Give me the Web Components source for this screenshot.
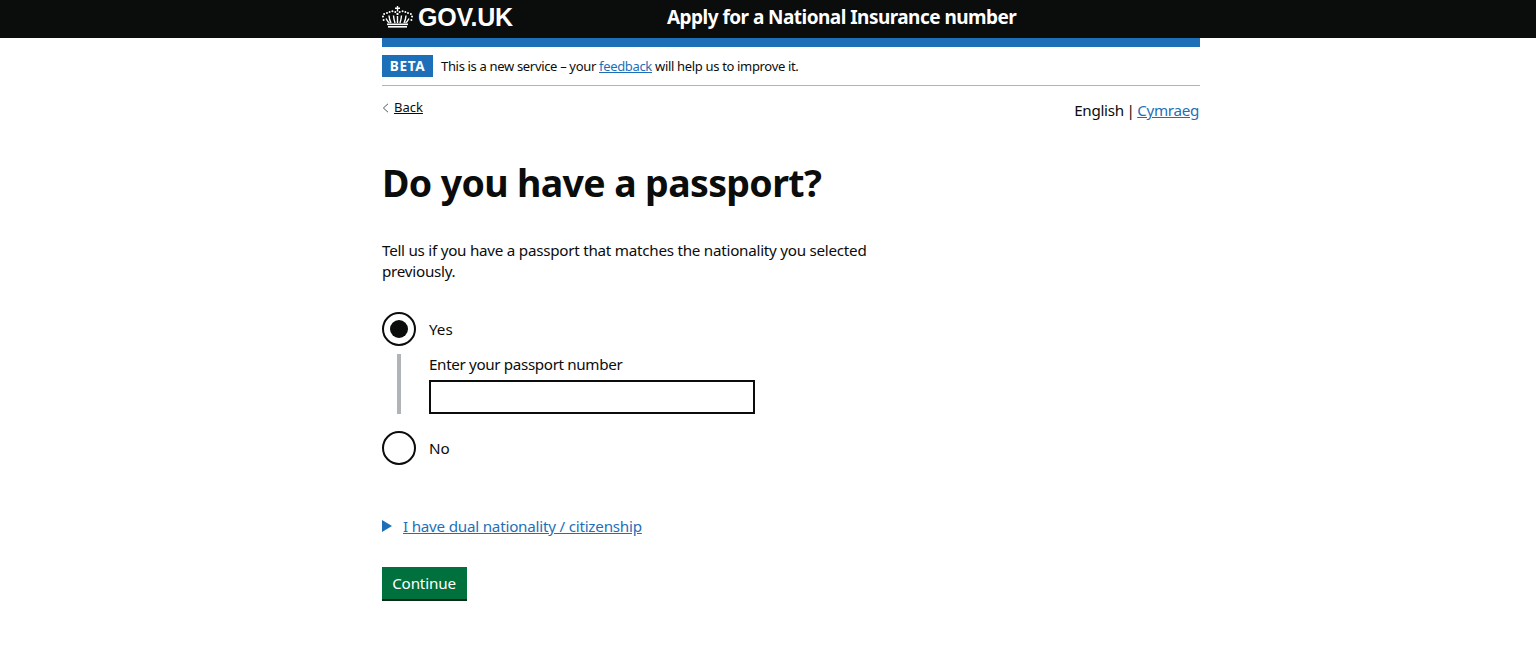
<!DOCTYPE html>
<html lang="en"><head><meta charset="utf-8"><title>Apply for a National Insurance number</title>
<style>
html,body{margin:0;padding:0;background:#fff;height:655px;overflow:hidden;font-family:"Noto Sans","Liberation Sans",sans-serif;color:#0b0c0c}
</style></head><body>
<gov-header></gov-header>
<gov-page>
  <gov-phase></gov-phase>
  <gov-nav></gov-nav>
  <gov-question></gov-question>
</gov-page>
<script>
function def(name, html){
  customElements.define(name, class extends HTMLElement{
    constructor(){super();this.attachShadow({mode:'open'}).innerHTML=html;}
  });
}
const crown=`<svg width="31" height="22" viewBox="0 0 31 22" fill="#fff" aria-hidden="true">
<path d="M14.8 0h1.4v1.6h1.8V3h-1.8v2.4h-1.4V3H13V1.600h1.800z"/>
<g fill="none" stroke="#fff" stroke-width="2" stroke-linecap="round" stroke-dasharray="0 3">
<path d="M15.500 8C13 4.600 9.500 4.600 7.500 6.200"/><path d="M15.500 8C18 4.600 21.500 4.600 23.500 6.200"/>
<path d="M5 7C2.500 6.800.8 8.600 1 11.500 1.200 13.500 2 15 3 16"/><path d="M26 7c2.500-.2 4.200 1.600 4 4.500-.2 2-1 3.500-2 4.500"/>
</g>
<g fill="none" stroke="#fff" stroke-width="1.400">
<path d="M7 9.500c.2 3 1 5.500 2 7.500M24 9.500c-.2 3-1 5.500-2 7.500M15.500 10v7M11.500 9.500c.2 3 .8 5.500 1.500 7.500M19.500 9.500c-.2 3-.8 5.500-1.500 7.500"/>
<path d="M4 12.500c1 2 2 3.500 3.500 4.500M27 12.500c-1 2-2 3.500-3.500 4.500"/>
</g>
<rect x="5" y="17.500" width="21" height="1.600"/>
<rect x="6" y="20" width="19" height="1.600"/>
</svg>`;
def('gov-header',`<style>
:host{display:block;background:#0b0c0c;height:38px;color:#fff}
.in{display:flex;align-items:center;height:38px;margin-left:382px;width:818px}
.logo{display:flex;align-items:center;gap:5px;width:285px;font:700 25px/38px "Liberation Sans",Arial,sans-serif;letter-spacing:-.25px}
.logo span{margin-top:-4px}
svg{display:block;margin-top:-4px}
.name{font:700 19px/38px "Noto Sans",sans-serif;letter-spacing:-.54px;margin-top:-5px}
</style><div class="in"><div class="logo">${crown}<span>GOV.UK</span></div><div class="name">Apply for a National Insurance number</div></div>`);

def('gov-page',`<style>
:host{display:block;width:818px;margin-left:382px}
.bar{height:9px;background:#1d70b8}
</style><div class="bar"></div><slot></slot>`);

def('gov-phase',`<style>
:host{display:flex;align-items:center;height:38px;border-bottom:1px solid #b1b4b6;font-size:13px;line-height:20px;gap:8px;letter-spacing:-.33px}
.tag{background:#1d70b8;color:#fff;font-weight:700;font-size:13.5px;letter-spacing:.7px;width:51px;height:22px;line-height:22px;text-align:center;margin-top:-1px}
a{color:#1d70b8}
</style><span class="tag">BETA</span><span>This is a new service – your <a href="#">feedback</a> will help us to improve it.</span>`);

def('gov-nav',`<style>
:host{display:flex;justify-content:space-between;align-items:flex-start;height:61px}
.back{display:flex;align-items:center;gap:5px;margin-top:12px;font-size:13px;line-height:19px;color:#0b0c0c}
a{color:inherit}
.lang{margin:13px 1px 0 0;font-size:15.2px;line-height:22px;letter-spacing:-.3px;word-spacing:-1px}
.lang a{color:#1d70b8}
svg{display:block}
</style>
<div class="back"><svg width="7" height="10" viewBox="0 0 7 10" fill="none" stroke="#505a5f" stroke-width="1"><path d="M6 .8L1.400 5 6 9.200"/></svg><a href="#">Back</a></div>
<div class="lang">English | <a href="#">Cymraeg</a></div>`);

def('gov-radio',`<style>
:host{display:flex;align-items:center;gap:13px;height:34px;font-size:15.2px}
.r{box-sizing:border-box;width:34px;height:34px;border:2px solid #0b0c0c;border-radius:50%;display:flex;align-items:center;justify-content:center;flex:none}
.d{width:18px;height:18px;border-radius:50%;background:#0b0c0c;display:none}
:host([checked]) .d{display:block}
</style><span class="r"><span class="d"></span></span><slot></slot>`);

def('gov-reveal',`<style>
:host{display:flow-root;margin:8px 0 17px 15px;border-left:4px solid #b1b4b6;padding-left:28px;height:60px;font-size:15.2px;letter-spacing:-.35px}
label{display:block;line-height:22px;margin:-1px 0 5px}
.i{box-sizing:border-box;display:block;width:326px;height:34px;border:2px solid #0b0c0c;background:#fff;margin:0;padding:0;outline:0}
</style><label for="p">Enter your passport number</label><input class="i" id="p" type="text">`);

def('gov-details',`<style>
:host{display:flex;align-items:center;gap:11px;height:24px;font-size:15.2px;color:#1d70b8;letter-spacing:-.22px}
a{color:inherit}
i{display:block;width:0;height:0;border-left:10px solid #1d70b8;border-top:6px solid transparent;border-bottom:6px solid transparent}
</style><i></i><a href="#">I have dual nationality / citizenship</a>`);

def('gov-button',`<style>
:host{display:inline-block}
button{box-sizing:border-box;display:block;width:85px;height:34px;border:0;border-bottom:2px solid #002d18;background:#00703c;color:#fff;font:15.2px/22px "Noto Sans",sans-serif;letter-spacing:-.15px;padding:0 1px 1px 0;margin:0}
</style><button type="button"><slot></slot></button>`);

def('gov-question',`<style>
:host{display:block}
h1{margin:0;font-size:37.5px;line-height:46px;font-weight:700;letter-spacing:-.65px;padding-top:13px}
p{margin:34px 0 30px;width:500px;font-size:15.2px;line-height:21px;letter-spacing:-.25px}
.det{margin-top:49px}
.btn{margin-top:29px}
</style>
<h1>Do you have a passport?</h1>
<p>Tell us if you have a passport that matches the nationality you selected previously.</p>
<gov-radio checked>Yes</gov-radio>
<gov-reveal></gov-reveal>
<gov-radio>No</gov-radio>
<div class="det"><gov-details></gov-details></div>
<div class="btn"><gov-button>Continue</gov-button></div>`);
</script>
</body></html>
